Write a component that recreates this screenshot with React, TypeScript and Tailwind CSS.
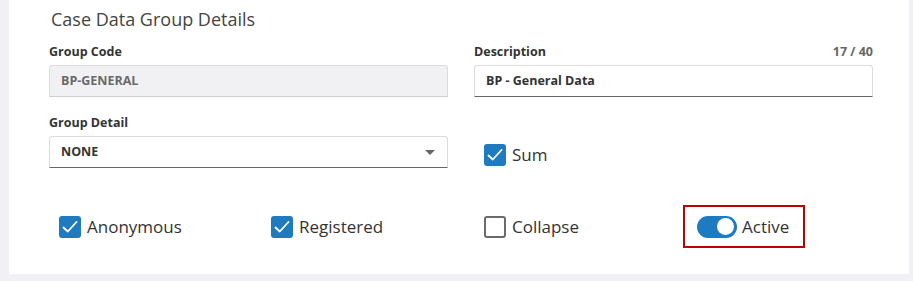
import React from "react";

const Check = ({ checked }: { checked: boolean }) =>
  checked ? (
    <span className="flex h-[22px] w-[22px] items-center justify-center rounded-[3px] bg-[#1f7bc0]">
      <svg width="18" height="18" viewBox="0 0 18 18" fill="none">
        <path d="M2.5 9.5 L6.8 13.5 L15.5 4" stroke="white" strokeWidth="1.8" strokeLinecap="round" strokeLinejoin="round" />
      </svg>
    </span>
  ) : (
    <span className="block h-[22px] w-[22px] rounded-[3px] border-2 border-[#6b6b6b] bg-white" />
  );

const CheckItem = ({ label, checked }: { label: string; checked: boolean }) => (
  <div className="flex items-center gap-[6px]">
    <Check checked={checked} />
    <span className="text-[17px] leading-[22px] text-[#333]">{label}</span>
  </div>
);

export default function App() {
  return (
    <div className="h-[281px] w-[913px] bg-[#f0f0f5] pl-[9px]" style={{ fontFamily: "'Open Sans', sans-serif" }}>
      <div className="h-[274px] w-[900px] bg-white pl-[40px] pt-[6px]">
        <div className="pl-[2px] text-[18px] leading-[26px] text-[#444]">Case Data Group Details</div>
        <div className="mt-[12px] grid grid-cols-[425px_425px]">
          <div className="w-[399px]">
            <div className="text-[12.5px] font-bold leading-[16px] text-[#333]">Group Code</div>
            <div className="mt-[5px] flex h-[32px] items-center rounded-t-[3px] border border-[#dcdcdc] border-b-[#cfcfcf] bg-[#f1f1f4] px-[11px] text-[12.5px] font-bold text-[#6a6a6a]">
              BP-GENERAL
            </div>
          </div>
          <div className="w-[399px]">
            <div className="flex justify-between text-[12.5px] font-bold leading-[16px]">
              <span className="text-[#333]">Description</span>
              <span className="text-[#666]">17 / 40</span>
            </div>
            <div className="mt-[5px] flex h-[32px] items-center rounded-t-[3px] border border-[#dcdcdc] border-b-[#666] px-[11px] text-[12.5px] font-bold text-[#333]">
              BP - General Data
            </div>
          </div>
          <div className="mt-[18px] w-[399px]">
            <div className="text-[12.5px] font-bold leading-[16px] text-[#333]">Group Detail</div>
            <div className="mt-[5px] flex h-[32px] items-center justify-between rounded-t-[3px] border border-[#dcdcdc] border-b-[#666] pl-[11px] pr-[12px] text-[12.5px] font-bold text-[#333]">
              <span>NONE</span>
              <svg width="10" height="5" viewBox="0 0 10 5">
                <path d="M0 0 L10 0 L5 5 Z" fill="#666" />
              </svg>
            </div>
          </div>
          <div className="flex items-end pb-[2px] pl-[10px]">
            <CheckItem label="Sum" checked />
          </div>
        </div>
        <div className="mt-[37px] grid grid-cols-[212px_213px_213px_212px] items-center pl-[10px]">
          <CheckItem label="Anonymous" checked />
          <CheckItem label="Registered" checked />
          <CheckItem label="Collapse" checked={false} />
          <div className="-ml-[14px] flex h-[43px] w-[122px] items-center gap-[5px] border-2 border-[#c00000] pl-[12px]">
            <span className="flex h-[22px] w-[40px] items-center justify-end rounded-full bg-[#1f7bc0] pr-[3px]">
              <span className="h-[17px] w-[17px] rounded-full bg-white" />
            </span>
            <span className="text-[17px] leading-[22px] text-[#333]">Active</span>
          </div>
        </div>
      </div>
    </div>
  );
}
